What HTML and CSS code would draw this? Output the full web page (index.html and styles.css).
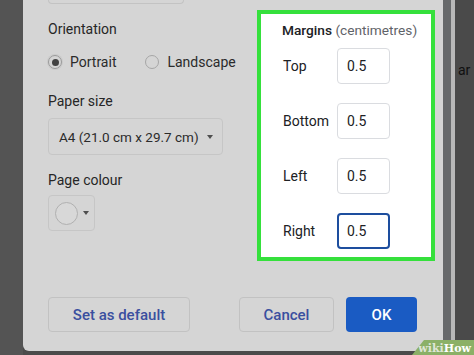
FILE: index.html
```html
<!DOCTYPE html>
<html>
<head>
<meta charset="utf-8">
<link rel="stylesheet" href="styles.css">
</head>
<body>
<div class="screen">
  <div class="left-strip"></div>
  <div class="dialog">
    <div class="content">
      <div class="left-col">
        <div class="top-box"></div>
        <div class="label label-first">Orientation</div>
        <div class="radios">
          <span class="radio checked"></span><span class="radio-text">Portrait</span>
          <span class="radio"></span><span class="radio-text">Landscape</span>
        </div>
        <div class="label label-paper">Paper size</div>
        <div class="select">
          <span>A4 (21.0 cm x 29.7 cm)</span>
          <span class="tri"></span>
        </div>
        <div class="label label-colour">Page colour</div>
        <div class="colour-btn">
          <span class="swatch"></span>
          <span class="tri"></span>
        </div>
      </div>
      <div class="margins">
        <div class="m-title"><span class="m-strong">Margins</span> <span class="m-unit">(centimetres)</span></div>
        <div class="m-row"><span class="m-label">Top</span><span class="m-input">0.5</span></div>
        <div class="m-row"><span class="m-label">Bottom</span><span class="m-input">0.5</span></div>
        <div class="m-row"><span class="m-label">Left</span><span class="m-input">0.5</span></div>
        <div class="m-row"><span class="m-label">Right</span><span class="m-input focused">0.5</span></div>
      </div>
    </div>
    <div class="footer">
      <div class="btn btn-default">Set as default</div>
      <div class="spacer"></div>
      <div class="btn btn-cancel">Cancel</div>
      <div class="btn btn-ok">OK</div>
    </div>
  </div>
  <div class="scroll-a"></div>
  <div class="scroll-b"></div>
  <div class="backdrop"><span class="bg-text">ar</span></div>
  <div class="watermark"><span class="wm-wiki">wiki</span><span class="wm-how">How</span></div>
</div>
</body>
</html>
```

FILE: styles.css
```css
html, body {
  margin: 0;
  padding: 0;
}
body {
  width: 474px;
  height: 355px;
  overflow: hidden;
  background: #4b4b4b;
  font-family: Roboto, "Liberation Sans", Arial, sans-serif;
}
.screen {
  position: relative;
  display: flex;
  width: 474px;
  height: 355px;
  background: #4b4b4b;
}
.left-strip {
  width: 23px;
  flex: none;
  background: #545454;
}
.dialog {
  width: 420px;
  flex: none;
  height: 351px;
  background: #d5d5d5;
  border-bottom-left-radius: 6px;
  display: flex;
  flex-direction: column;
  box-sizing: border-box;
  padding-left: 25px;
}
.content {
  display: flex;
  height: 297px;
}
.left-col {
  width: 209px;
  flex: none;
  color: #262626;
}
.top-box {
  width: 136px;
  height: 4px;
  box-sizing: border-box;
  border: 1px solid #c3c3c3;
  border-top: none;
  border-radius: 0 0 4px 4px;
}
.label {
  font-size: 14px;
  line-height: 20px;
  height: 20px;
}
.label-first { margin-top: 15px; }
.radios {
  display: flex;
  align-items: center;
  margin-top: 13px;
  height: 20px;
  font-size: 14px;
  color: #2b2b2b;
}
.radio {
  width: 14px;
  height: 14px;
  box-sizing: border-box;
  border: 1.5px solid #a6a6a6;
  border-radius: 50%;
  flex: none;
  display: flex;
  align-items: center;
  justify-content: center;
}
.radio.checked {
  border-color: #9a9a9a;
  box-shadow: 0 0 0 1px #cacaca;
}
.radio.checked::after {
  content: "";
  width: 7px;
  height: 7px;
  border-radius: 50%;
  background: #424242;
}
.radio-text {
  margin-left: 8px;
  margin-right: 29px;
}
.label-paper { margin-top: 19px; }
.select {
  margin-top: 7px;
  width: 175px;
  height: 37px;
  box-sizing: border-box;
  border: 1px solid #c6c6c6;
  border-radius: 4px;
  display: flex;
  align-items: center;
  padding-left: 10px;
  font-size: 13.5px;
  color: #2b2b2b;
}
.tri {
  width: 0;
  height: 0;
  border-left: 3.5px solid transparent;
  border-right: 3.5px solid transparent;
  border-top: 4px solid #4f4f4f;
}
.select .tri { margin-left: 8px; }
.label-colour { margin-top: 15px; }
.colour-btn {
  margin-top: 5px;
  width: 47px;
  height: 36px;
  box-sizing: border-box;
  border: 1px solid #c6c6c6;
  border-radius: 4px;
  display: flex;
  align-items: center;
  padding-left: 6px;
}
.swatch {
  width: 23px;
  height: 23px;
  box-sizing: border-box;
  border: 1px solid #b0b0b0;
  border-radius: 50%;
  background: #d8d8d8;
}
.colour-btn .tri { margin-left: 5px; }

.margins {
  margin-top: 10px;
  width: 178px;
  height: 251px;
  box-sizing: border-box;
  border: 4px solid #35e03c;
  background: #ffffff;
  padding: 7px 0 0 21px;
  color: #202124;
}
.m-title {
  font-size: 13.7px;
  line-height: 18px;
}
.m-strong { font-weight: 500; color: #202124; }
.m-unit { color: #5f6368; }
.m-row {
  display: flex;
  align-items: center;
  height: 36px;
  margin-top: 19px;
  font-size: 14px;
}
.m-title + .m-row { margin-top: 9px; }
.m-label {
  width: 54px;
  flex: none;
  padding-left: 1px;
}
.m-input {
  width: 53px;
  height: 36px;
  box-sizing: border-box;
  border: 1px solid #dadce0;
  border-radius: 4px;
  display: flex;
  align-items: center;
  padding-left: 9px;
  color: #202124;
}
.m-input.focused {
  border: 2px solid #1d4e9e;
  padding-left: 8px;
}

.footer {
  display: flex;
  align-items: flex-start;
  padding-right: 26px;
}
.spacer { flex: 1; }
.btn {
  height: 35px;
  box-sizing: border-box;
  border-radius: 4px;
  display: flex;
  align-items: center;
  justify-content: center;
  font-size: 15px;
  font-weight: 500;
}
.btn-default, .btn-cancel {
  border: 1px solid #c2c2c2;
  color: #3a4f9f;
}
.btn-default { width: 142px; }
.btn-cancel { width: 95px; }
.btn-ok {
  width: 71px;
  margin-left: 12px;
  background: #1a5bc3;
  color: #ffffff;
}

.scroll-a {
  width: 8px;
  flex: none;
  background: #67696b;
}
.scroll-b {
  width: 4px;
  flex: none;
  background: #b8b8b8;
}
.backdrop {
  flex: 1;
  background: #4a4a4a;
  overflow: hidden;
  white-space: nowrap;
}
.bg-text {
  display: block;
  margin-top: 61px;
  margin-left: 3px;
  font-size: 14px;
  line-height: 18px;
  color: #101010;
}
.watermark {
  position: absolute;
  right: 0;
  bottom: 0;
  width: 62px;
  height: 15px;
  background: #8bb067;
  clip-path: polygon(12px 0, 100% 0, 100% 100%, 0 100%);
  display: flex;
  align-items: flex-end;
  justify-content: flex-end;
  padding-right: 3px;
  box-sizing: border-box;
  font-family: "DejaVu Serif", "Liberation Serif", serif;
  font-size: 11px;
  line-height: 13px;
  font-weight: bold;
}
.wm-wiki { color: #dfe6d6; }
.wm-how { color: #ffffff; }
```
